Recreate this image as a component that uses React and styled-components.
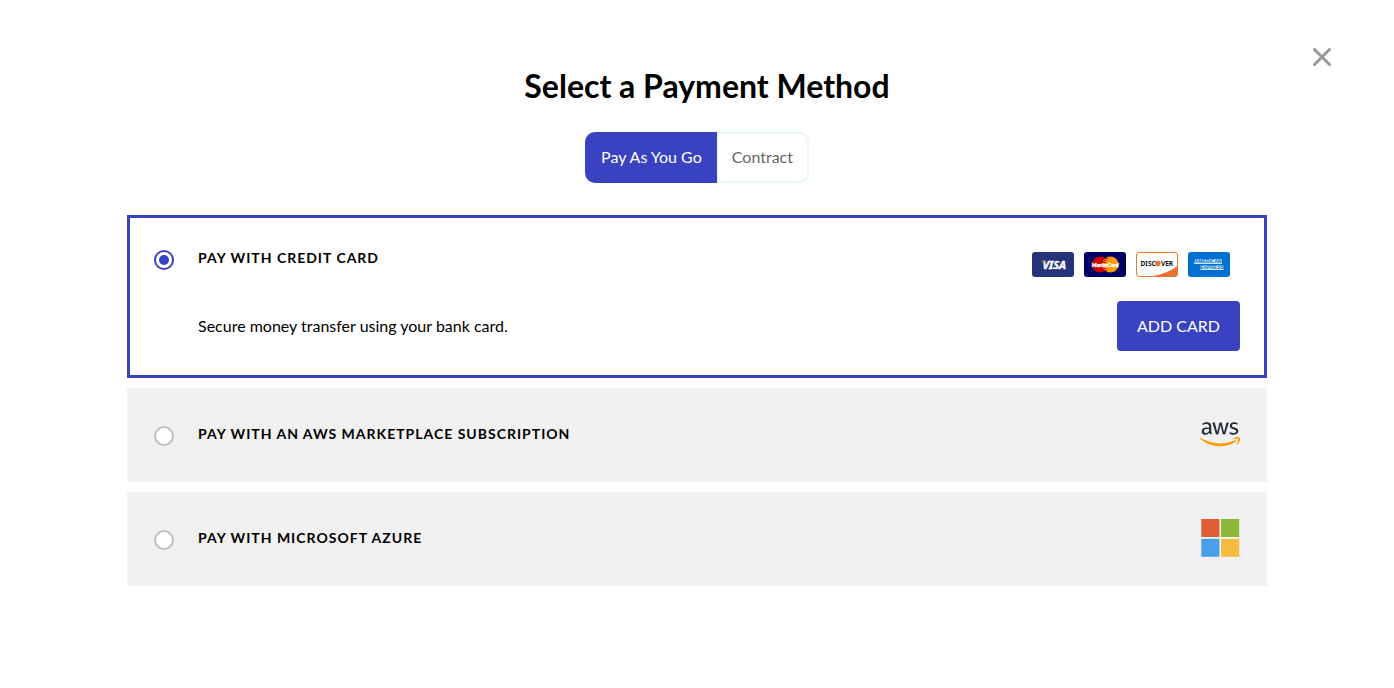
import React, { useState } from 'react';
import styled, { createGlobalStyle } from 'styled-components';
import { FaAws } from 'react-icons/fa';

const GlobalStyle = createGlobalStyle`
  * {
    box-sizing: border-box;
  }

  body {
    margin: 0;
    background: #fff;
    color: #000;
    font-family: Lato, 'Liberation Sans', sans-serif;
    font-size: 16px;
  }

  button {
    font: inherit;
    cursor: pointer;
  }
`;

const Page = styled.div`
  padding: 48px 63px 64px;
`;

const TopBar = styled.div`
  display: flex;
  justify-content: flex-end;
`;

const CloseButton = styled.button`
  display: flex;
  padding: 0;
  border: none;
  background: transparent;
  color: #999;
`;

const Content = styled.main`
  max-width: 1140px;
  margin: 0 auto;
`;

const Title = styled.h1`
  margin: 0 0 26px;
  padding-left: 20px;
  font-size: 32px;
  font-weight: 700;
  line-height: 40px;
  text-align: center;
`;

const Tabs = styled.div`
  display: flex;
  justify-content: center;
  margin-bottom: 32px;
`;

const Tab = styled.button`
  height: 51px;
  padding: 0 14px 2px;
  border: 2px solid ${(props) => (props.$active ? '#3942c1' : '#e6f7f9')};
  background: ${(props) => (props.$active ? '#3942c1' : '#fff')};
  color: ${(props) => (props.$active ? '#fff' : '#666')};

  &:first-child {
    border-right-width: 1px;
    border-radius: 10px 0 0 10px;
  }

  &:last-child {
    border-left-width: 1px;
    border-radius: 0 10px 10px 0;
  }
`;

const MethodList = styled.div`
  display: flex;
  flex-direction: column;
  gap: 10px;
`;

const Method = styled.section`
  padding: 24px;
  border: 3px solid ${(props) => (props.$selected ? '#3942c1' : '#f1f1f1')};
  background: ${(props) => (props.$selected ? '#fff' : '#f1f1f1')};
`;

const MethodHeader = styled.div`
  display: flex;
  align-items: flex-start;
  justify-content: space-between;
`;

const MethodLabel = styled.label`
  display: flex;
  align-items: center;
  gap: 24px;
  padding-top: ${(props) => (props.$selected ? 0 : 3)}px;
  font-size: 14px;
  font-weight: 700;
  line-height: 32px;
  letter-spacing: 1px;
  text-transform: uppercase;
  cursor: pointer;
`;

const Radio = styled.input`
  appearance: none;
  flex: none;
  width: 20px;
  height: 20px;
  margin: 4px 0 0;
  padding: 3px;
  border: 2px solid #bfbfbf;
  border-radius: 50%;
  background: #fff;

  &:checked {
    border-color: #3942c1;
    background: #3942c1 content-box;
  }
`;

const CardLogos = styled.div`
  display: flex;
  gap: 10px;
  padding: 10px;
`;

const Logo = styled.div`
  display: flex;
  width: 40px;
  height: 40px;
`;

const MethodBody = styled.div`
  display: flex;
  align-items: center;
  justify-content: space-between;
  margin-top: 14px;
  padding-left: 44px;
`;

const Description = styled.p`
  margin: 0;
  padding-bottom: 2px;
`;

const AddButton = styled.button`
  height: 50px;
  padding: 0 20px 2px;
  border: none;
  border-radius: 4px;
  background: #3942c1;
  color: #fff;
  text-transform: uppercase;
`;

function CloseIcon() {
  return (
    <svg width="18" height="18" viewBox="0 0 18 18" aria-hidden="true">
      <path d="M1.5 1.5l15 15M16.5 1.5l-15 15" stroke="currentColor" strokeWidth="3" strokeLinecap="round" />
    </svg>
  );
}

function VisaLogo() {
  return (
    <svg width="42" height="25" viewBox="0 0 42 25" role="img" aria-label="Visa">
      <rect width="42" height="25" rx="3" fill="#26337a" />
      <text x="10.5" y="16.6" fontFamily="Noto Sans" fontSize="11" fontWeight="700" fontStyle="italic" fill="#fff" stroke="#fff" strokeWidth=".4">VISA</text>
      <path d="M9.3 8.7h2.7q.9 0 1.1.9l.7 3q-1.5-2.6-4.5-3.5z" fill="#e7a13d" />
    </svg>
  );
}

function MasterCardLogo() {
  return (
    <svg width="42" height="25" viewBox="0 0 42 25" role="img" aria-label="MasterCard">
      <rect width="42" height="25" rx="3" fill="#000066" />
      <circle cx="16" cy="12.5" r="8" fill="#cc0000" />
      <circle cx="26.5" cy="12.5" r="8" fill="#ff9900" />
      <path d="M21.2 6.5h2.4M20 8.5h2.4M19 10.5h3M19 14.5h3M20 16.5h2.4M21.2 18.5h1.2" stroke="#cc0000" strokeWidth="1" />
      <text x="21.2" y="14.7" textAnchor="middle" fontFamily="Lato" fontSize="5.3" fontWeight="900" fontStyle="italic" fill="#fff" stroke="#fff" strokeWidth=".3">MasterCard</text>
    </svg>
  );
}

function DiscoverLogo() {
  return (
    <svg width="42" height="25" viewBox="0 0 42 25" role="img" aria-label="Discover">
      <rect x=".5" y=".5" width="41" height="24" rx="2.5" fill="#fff" stroke="#e97b35" />
      <path d="M41.5 14v8a2.5 2.5 0 0 1-2.5 2.5H14Q31 22 41.5 14z" fill="#e97232" />
      <g fontFamily="Noto Sans" fontSize="6.6" fontWeight="700" fill="#111">
        <text x="4.5" y="13.8">DISC</text>
        <text x="37.2" y="13.8" textAnchor="end">VER</text>
      </g>
      <circle cx="21.8" cy="11.5" r="2.7" fill="#e97232" />
    </svg>
  );
}

function AmexLogo() {
  return (
    <svg width="42" height="25" viewBox="0 0 42 25" role="img" aria-label="American Express">
      <rect width="42" height="25" rx="3" fill="#0070d1" />
      <path d="M7.5 7H34v5H6zM12.5 13h23v5h-23z" fill="#d0e7fa" />
      <g fontFamily="Liberation Sans" fontSize="5" fontWeight="700" fill="#0070d1">
        <text x="20.2" y="11.3" textAnchor="middle">AMERICAN</text>
        <text x="24" y="17.3" textAnchor="middle">EXPRESS</text>
      </g>
    </svg>
  );
}

function AwsLogo() {
  return (
    <>
      <svg width="0" height="0" aria-hidden="true">
        <linearGradient id="aws-fill" gradientUnits="userSpaceOnUse" x1="0" y1="0" x2="0" y2="512">
          <stop offset=".56" stopColor="#252f3e" />
          <stop offset=".56" stopColor="#ff9900" />
        </linearGradient>
      </svg>
      <FaAws size={40} viewBox="0 12 640 512" fill="url(#aws-fill)" role="img" aria-label="AWS" />
    </>
  );
}

function MicrosoftLogo() {
  return (
    <svg width="40" height="40" viewBox="0 0 40 40" role="img" aria-label="Microsoft">
      <rect x="1.3" y="0" width="37.9" height="38" fill="#f8f8f8" />
      <rect x="1.3" y="0" width="18.2" height="18" fill="#df5c34" />
      <rect x="21" y="0" width="18.2" height="18" fill="#8cb837" />
      <rect x="1.3" y="19.8" width="18.2" height="18" fill="#4a9fe8" />
      <rect x="21" y="19.8" width="18.2" height="18" fill="#f4bb41" />
    </svg>
  );
}

function PaymentMethod(props) {
  const { id, label, selected, onSelect, logo, children } = props;

  return (
    <Method $selected={selected}>
      <MethodHeader>
        <MethodLabel htmlFor={id} $selected={selected}>
          <Radio
            type="radio"
            id={id}
            name="payment-method"
            checked={selected}
            onChange={() => onSelect(id)}
          />
          {label}
        </MethodLabel>
        {logo}
      </MethodHeader>
      {selected && children}
    </Method>
  );
}

function App() {
  const [plan, setPlan] = useState('payg');
  const [method, setMethod] = useState('card');

  return (
    <>
      <GlobalStyle />
      <Page>
        <TopBar>
          <CloseButton type="button" aria-label="Close">
            <CloseIcon />
          </CloseButton>
        </TopBar>
        <Content>
          <Title>Select a Payment Method</Title>
          <Tabs>
            <Tab type="button" $active={plan === 'payg'} onClick={() => setPlan('payg')}>
              Pay As You Go
            </Tab>
            <Tab type="button" $active={plan === 'contract'} onClick={() => setPlan('contract')}>
              Contract
            </Tab>
          </Tabs>
          <MethodList>
            <PaymentMethod
              id="card"
              label="Pay with credit card"
              selected={method === 'card'}
              onSelect={setMethod}
              logo={
                <CardLogos>
                  <VisaLogo />
                  <MasterCardLogo />
                  <DiscoverLogo />
                  <AmexLogo />
                </CardLogos>
              }
            >
              <MethodBody>
                <Description>Secure money transfer using your bank card.</Description>
                <AddButton type="button">Add card</AddButton>
              </MethodBody>
            </PaymentMethod>
            <PaymentMethod
              id="aws"
              label="Pay with an AWS Marketplace subscription"
              selected={method === 'aws'}
              onSelect={setMethod}
              logo={<Logo><AwsLogo /></Logo>}
            />
            <PaymentMethod
              id="azure"
              label="Pay with Microsoft Azure"
              selected={method === 'azure'}
              onSelect={setMethod}
              logo={<Logo><MicrosoftLogo /></Logo>}
            />
          </MethodList>
        </Content>
      </Page>
    </>
  );
}

export default App;
